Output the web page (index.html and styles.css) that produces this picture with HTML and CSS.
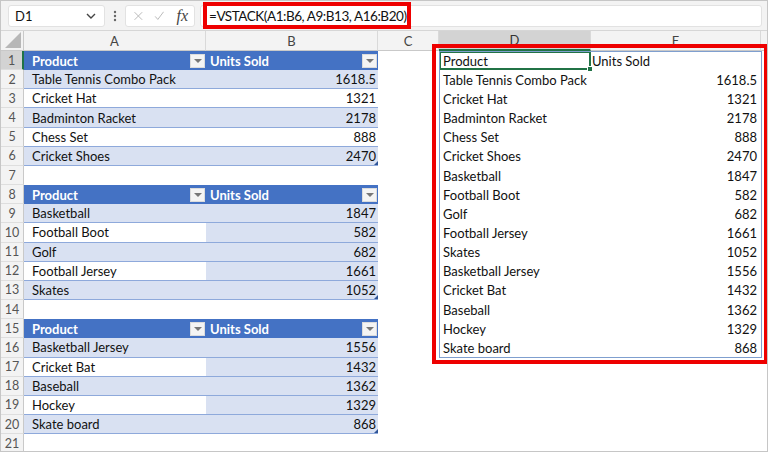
FILE: index.html
```html
<!DOCTYPE html>
<html lang="en">
<head>
  <meta charset="UTF-8">
  <title>VSTACK example</title>
  <link rel="stylesheet" href="styles.css">
</head>
<body>
  <div class="window">
    <div class="formula-bar">
      <div class="namebox">
        <span>D1</span>
        <svg class="chevron" width="10" height="6" viewBox="0 0 10 6"><path d="M1 1l4 4 4-4" fill="none" stroke="#444" stroke-width="1.4"/></svg>
      </div>
      <div class="dots">
        <svg width="4" height="12" viewBox="0 0 4 12"><circle cx="2" cy="2" r="1.2" fill="#666"/><circle cx="2" cy="6" r="1.2" fill="#666"/><circle cx="2" cy="10" r="1.2" fill="#666"/></svg>
      </div>
      <div class="fx-box">
        <svg width="14" height="14" viewBox="0 0 14 14"><path d="M2 2l10 10M12 2L2 12" stroke="#b5b5b5" stroke-width="1.2" fill="none"/></svg>
        <svg width="14" height="14" viewBox="0 0 14 14"><path d="M1.5 7.5l3.5 4 7.5-10" stroke="#b5b5b5" stroke-width="1.2" fill="none"/></svg>
        <span class="fx">fx</span>
      </div>
      <div class="formula">=VSTACK(A1:B6, A9:B13, A16:B20)</div>
    </div>

    <div class="sheet">
      <!-- column headers -->
      <div class="corner"><svg width="16" height="16" viewBox="0 0 16 16"><path d="M16 0V16H0Z" fill="#b7b7b7"/></svg></div>
      <div class="colhead">A</div>
      <div class="colhead">B</div>
      <div class="colhead">C</div>
      <div class="colhead sel">D</div>
      <div class="colhead">E</div>
      <div class="colhead last"></div>

      <!-- row 1 -->
      <div class="rn sel">1</div>
      <div class="ca th">Product<i class="filter"></i></div>
      <div class="cb th">Units Sold<i class="filter"></i></div>
      <div class="cd active">Product<i class="handle"></i></div>
      <div class="ce">Units Sold</div>

      <div class="rn">2</div>
      <div class="ca tb band">Table Tennis Combo Pack</div>
      <div class="cb tb band num">1618.5</div>
      <div class="cd">Table Tennis Combo Pack</div>
      <div class="ce num">1618.5</div>

      <div class="rn">3</div>
      <div class="ca tb">Cricket Hat</div>
      <div class="cb tb num">1321</div>
      <div class="cd">Cricket Hat</div>
      <div class="ce num">1321</div>

      <div class="rn">4</div>
      <div class="ca tb band">Badminton Racket</div>
      <div class="cb tb band num">2178</div>
      <div class="cd">Badminton Racket</div>
      <div class="ce num">2178</div>

      <div class="rn">5</div>
      <div class="ca tb">Chess Set</div>
      <div class="cb tb num">888</div>
      <div class="cd">Chess Set</div>
      <div class="ce num">888</div>

      <div class="rn">6</div>
      <div class="ca tb band">Cricket Shoes</div>
      <div class="cb tb band num end">2470</div>
      <div class="cd">Cricket Shoes</div>
      <div class="ce num">2470</div>

      <div class="rn">7</div>
      <div class="cd">Basketball</div>
      <div class="ce num">1847</div>

      <div class="rn">8</div>
      <div class="ca th">Product<i class="filter"></i></div>
      <div class="cb th">Units Sold<i class="filter"></i></div>
      <div class="cd">Football Boot</div>
      <div class="ce num">582</div>

      <div class="rn">9</div>
      <div class="ca tb band">Basketball</div>
      <div class="cb tb band num">1847</div>
      <div class="cd">Golf</div>
      <div class="ce num">682</div>

      <div class="rn">10</div>
      <div class="ca tb">Football Boot</div>
      <div class="cb tb band num">582</div>
      <div class="cd">Football Jersey</div>
      <div class="ce num">1661</div>

      <div class="rn">11</div>
      <div class="ca tb band">Golf</div>
      <div class="cb tb band num">682</div>
      <div class="cd">Skates</div>
      <div class="ce num">1052</div>

      <div class="rn">12</div>
      <div class="ca tb">Football Jersey</div>
      <div class="cb tb band num">1661</div>
      <div class="cd">Basketball Jersey</div>
      <div class="ce num">1556</div>

      <div class="rn">13</div>
      <div class="ca tb band">Skates</div>
      <div class="cb tb band num end">1052</div>
      <div class="cd">Cricket Bat</div>
      <div class="ce num">1432</div>

      <div class="rn">14</div>
      <div class="cd">Baseball</div>
      <div class="ce num">1362</div>

      <div class="rn">15</div>
      <div class="ca th">Product<i class="filter"></i></div>
      <div class="cb th">Units Sold<i class="filter"></i></div>
      <div class="cd">Hockey</div>
      <div class="ce num">1329</div>

      <div class="rn">16</div>
      <div class="ca tb band">Basketball Jersey</div>
      <div class="cb tb band num">1556</div>
      <div class="cd">Skate board</div>
      <div class="ce num">868</div>

      <div class="rn">17</div>
      <div class="ca tb">Cricket Bat</div>
      <div class="cb tb band num">1432</div>

      <div class="rn">18</div>
      <div class="ca tb band">Baseball</div>
      <div class="cb tb band num">1362</div>

      <div class="rn">19</div>
      <div class="ca tb">Hockey</div>
      <div class="cb tb band num">1329</div>

      <div class="rn">20</div>
      <div class="ca tb band">Skate board</div>
      <div class="cb tb band num end">868</div>

      <div class="rn">21</div>

      <!-- spill range outline -->
      <div class="spill"></div>
    </div>

    <div class="mark mark-formula"></div>
    <div class="mark mark-result"></div>
  </div>
</body>
</html>
```

FILE: styles.css
```css
* {
  box-sizing: border-box;
}

body {
  margin: 0;
  font-family: 'Lato', 'Liberation Sans', sans-serif;
  color: #111;
}

.window {
  position: relative;
  width: 768px;
  height: 452px;
  overflow: hidden;
  background: #fff;
  border: 1px solid #c6c6c6;
}

/* formula bar */
.formula-bar {
  display: flex;
  align-items: center;
  height: 30px;
  padding: 0 5px 0 7px;
  background: #f3f3f3;
  border-bottom: 1px solid #d6d6d6;
}

.namebox {
  display: flex;
  align-items: center;
  justify-content: space-between;
  width: 97px;
  height: 22px;
  padding: 0 8px 0 6px;
  background: #fff;
  border: 1px solid #e2e2e2;
  border-radius: 3px;
  font-size: 13px;
}

.dots {
  display: flex;
  width: 20px;
  justify-content: center;
}

.fx-box {
  display: flex;
  align-items: center;
  gap: 10px;
  width: 70px;
  height: 22px;
  padding: 0 6px 0 7px;
  background: #fff;
  border: 1px solid #e2e2e2;
  border-radius: 3px;
}

.fx {
  font-family: 'Liberation Serif', serif;
  font-style: italic;
  font-size: 16px;
  color: #444;
  margin-left: 2px;
}

.formula {
  flex: 1;
  height: 22px;
  margin-left: 5px;
  padding-left: 8px;
  line-height: 21px;
  background: #fff;
  border: 1px solid #e2e2e2;
  border-radius: 3px;
  font-size: 13.5px;
  letter-spacing: -0.45px;
}

/* grid */
.sheet {
  position: relative;
  display: grid;
  grid-template-columns: 23px 182px 172px 61px 152px 170px 1fr;
  grid-template-rows: 20px repeat(21, 19.17px);
  font-size: 13px;
}

.corner {
  display: flex;
  align-items: flex-end;
  justify-content: flex-end;
  padding: 0 2px 2px 0;
  background: #f3f3f3;
  border-right: 1px solid #c9c9c9;
  border-bottom: 1px solid #c9c9c9;
}

.colhead {
  display: flex;
  align-items: center;
  justify-content: center;
  background: #f3f3f3;
  border-right: 1px solid #d9d9d9;
  border-bottom: 1px solid #c9c9c9;
  color: #444;
  font-size: 13px;
}

.colhead.sel {
  background: #d3d3d3;
  border-bottom: 2px solid #217346;
  color: #333;
}

.colhead.last {
  border-right: none;
}

.rn {
  grid-column: 1;
  display: flex;
  align-items: center;
  justify-content: center;
  background: #f3f3f3;
  border-right: 1px solid #c9c9c9;
  border-bottom: 1px solid #dedede;
  color: #555;
  font-size: 12.5px;
}

.rn.sel {
  background: #d3d3d3;
  border-right: 2px solid #217346;
}

.ca, .cb, .cd, .ce {
  display: flex;
  align-items: center;
  white-space: nowrap;
}

.ca { grid-column: 2; padding-left: 8px; }
.cb { grid-column: 3; padding-left: 4px; padding-right: 2px; }
.cd { grid-column: 5; padding-left: 4px; }
.ce { grid-column: 6; padding-left: 1px; padding-right: 4px; }

.num {
  justify-content: flex-end;
}

/* excel table */
.th {
  background: #4472c4;
  color: #fff;
  font-weight: bold;
  justify-content: space-between;
  padding-right: 1px;
}

.filter {
  position: relative;
  width: 15px;
  height: 14px;
  background: #f4f4f4;
  border: 1px solid #dcdcdc;
}

.filter::after {
  content: "";
  position: absolute;
  left: 3px;
  top: 4px;
  border-left: 4px solid transparent;
  border-right: 4px solid transparent;
  border-top: 4px solid #777;
}

.tb {
  border-bottom: 1px solid #8ea9db;
}

.band {
  background: #d9e1f2;
}

.end {
  position: relative;
}

.end::after {
  content: "";
  position: absolute;
  right: 0;
  bottom: 0;
  border-left: 4px solid transparent;
  border-bottom: 4px solid #2f5597;
}

/* result range */
.active {
  position: relative;
  border: 2px solid #217346;
  padding-left: 2px;
}

.handle {
  position: absolute;
  right: -4px;
  bottom: -4px;
  width: 6px;
  height: 6px;
  background: #217346;
  border: 1px solid #fff;
}

.spill {
  position: absolute;
  left: 438px;
  top: 20px;
  width: 323px;
  height: 307px;
  border: 1px solid #7f9fcf;
  pointer-events: none;
}

/* red annotation boxes */
.mark {
  position: absolute;
  border: 4px solid #ee0000;
}

.mark-formula {
  left: 202px;
  top: 1px;
  width: 208px;
  height: 27px;
}

.mark-result {
  left: 431px;
  top: 43px;
  width: 336px;
  height: 320px;
}
```
